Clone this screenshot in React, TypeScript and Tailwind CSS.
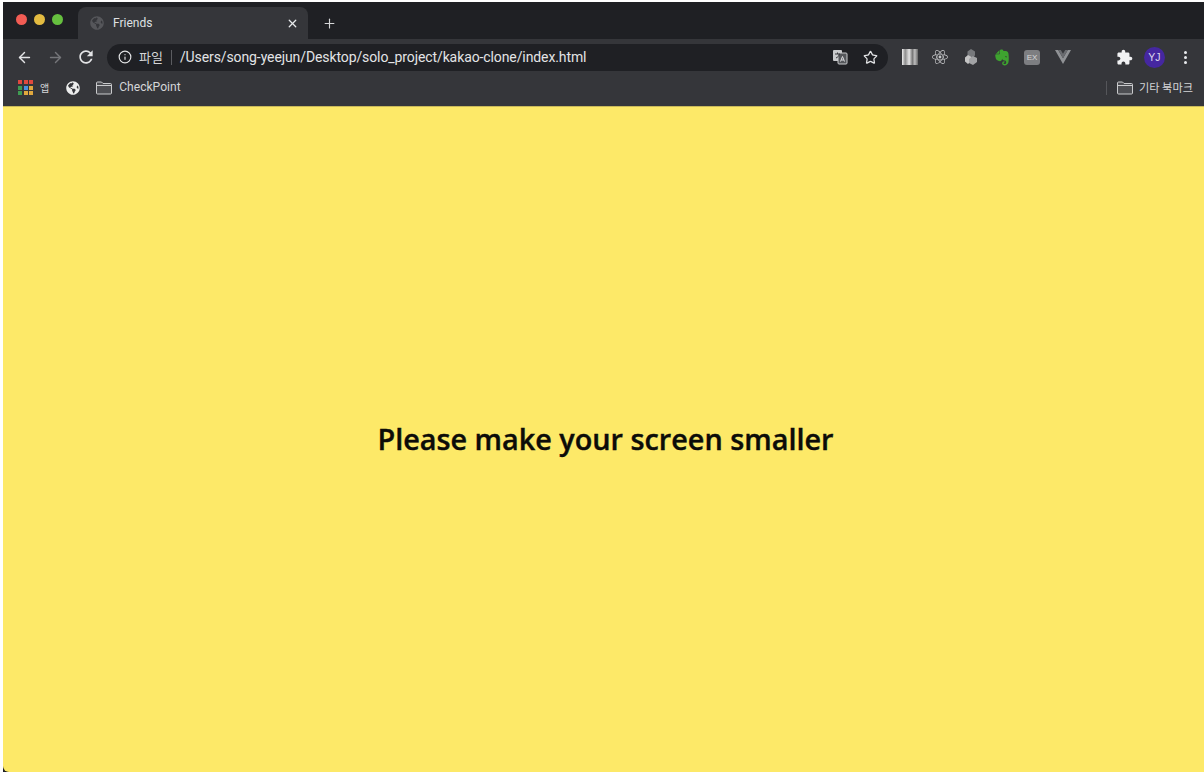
import React from 'react';
import { ArrowLeft, ArrowRight, Info, Star, Plus, X } from 'lucide-react';
import { FaGlobeAmericas, FaReact } from 'react-icons/fa';
import { SiEvernote } from 'react-icons/si';

const APP_COLORS = ['#e0483e', '#e0483e', '#e0483e', '#3f9c52', '#4a8fe0', '#e0a83e', '#3f9c52', '#e0a83e', '#e0a83e'];

function AppsGrid() {
  return (
    <div className="grid grid-cols-3 gap-[1.500px] w-[15px] h-[15px]">
      {APP_COLORS.map((color, i) => (
        <span key={i} className="w-[4px] h-[4px]" style={{ backgroundColor: color }} />
      ))}
    </div>
  );
}

function FolderIcon({ className }: { className: string }) {
  return (
    <svg className={className} width="16" height="14" viewBox="0 0 16 14">
      <path d="M0.500 2a1 1 0 0 1 1-1h4l1.500 1.500h7.500a1 1 0 0 1 1 1V12a1 1 0 0 1-1 1h-13a1 1 0 0 1-1-1z" fill="#4d4e52" stroke="#c9cacc" strokeWidth="1" />
      <path d="M1 4.500h14" stroke="#c9cacc" strokeWidth="1" />
    </svg>
  );
}

function ReloadIcon() {
  return (
    <svg width="20" height="20" viewBox="0 0 24 24" fill="#e3e4e6">
      <path d="M17.650 6.350C16.200 4.900 14.210 4 12 4c-4.420 0-7.990 3.580-7.990 8s3.570 8 7.990 8c3.730 0 6.840-2.550 7.730-6h-2.080c-.82 2.330-3.040 4-5.650 4-3.310 0-6-2.690-6-6s2.690-6 6-6c1.660 0 3.140.69 4.220 1.780L13 11h7V4l-2.350 2.350z" />
    </svg>
  );
}

function ExtensionIcon() {
  return (
    <svg width="17" height="17" viewBox="0 0 24 24" fill="#f1f2f3">
      <path d="M20.500 11H19V7c0-1.100-.9-2-2-2h-4V3.500C13 2.120 11.880 1 10.500 1S8 2.120 8 3.500V5H4c-1.100 0-1.990.9-1.990 2v3.800H3.500c1.490 0 2.700 1.210 2.700 2.700s-1.210 2.700-2.700 2.700H2V20c0 1.100.9 2 2 2h3.800v-1.500c0-1.490 1.210-2.700 2.700-2.700 1.490 0 2.700 1.210 2.700 2.700V22H17c1.100 0 2-.9 2-2v-4h1.500c1.380 0 2.500-1.120 2.500-2.500S21.880 11 20.500 11z" />
    </svg>
  );
}

function TranslateIcon() {
  return (
    <svg width="16" height="16" viewBox="0 0 16 16">
      <rect x="1" y="1" width="9" height="11" rx="1" fill="#c9cacc" />
      <rect x="6" y="4" width="9" height="11" rx="1" fill="#55575b" stroke="#c9cacc" strokeWidth="1" />
      <path d="M3 5h5M5.500 3.500v1.500M4 9c2-1 3-2 3.500-4" stroke="#3a3b3f" strokeWidth="1" fill="none" />
      <path d="M8.500 12.500l2-5 2 5M9.300 11h2.400" stroke="#dcdde0" strokeWidth="1" fill="none" />
    </svg>
  );
}

function BarsIcon() {
  return (
    <svg width="16" height="16" viewBox="0 0 16 16">
      <defs>
        <linearGradient id="bars">
          <stop offset="0" stopColor="#f0f0f0" />
          <stop offset="0.2" stopColor="#8d8d8d" />
          <stop offset="0.45" stopColor="#e4e4e4" />
          <stop offset="0.65" stopColor="#777" />
          <stop offset="0.8" stopColor="#bdbdbd" />
          <stop offset="1" stopColor="#666" />
        </linearGradient>
      </defs>
      <rect width="16" height="16" fill="url(#bars)" />
    </svg>
  );
}

function CubesIcon() {
  return (
    <svg width="12" height="16" viewBox="0 0 12 16">
      <path d="M6 0l4 2.500v4L6 9 2.500 6.500v-4z" fill="#77797c" />
      <path d="M3 6l3.500 2v4L3 15 0 12.500v-4z" fill="#c4c4c4" />
      <path d="M8 7l4 2v4l-4 3-4-2v-4z" fill="#a2a3a5" />
    </svg>
  );
}

function VueIcon() {
  return (
    <svg width="16" height="14" viewBox="0 0 16 14">
      <polygon points="0,0 3.200,0 8,8.300 12.800,0 16,0 8,14" fill="#909295" />
      <polygon points="3.200,0 5.800,0 8,3.800 10.200,0 12.800,0 8,8.300" fill="#6a6c70" />
    </svg>
  );
}

export default function App() {
  return (
    <div className="w-[1204px] h-[772px] overflow-hidden bg-white pt-[2px] pl-[3px] flex flex-col font-['Liberation_Sans',sans-serif]">
      <div className="flex-1 flex flex-col bg-[#1f2024] overflow-hidden">
        {/* tab strip */}
        <div className="h-[37px] flex items-end bg-[#1f2024] shrink-0">
          <div className="flex items-center gap-[7px] ml-[13px] h-[37px] pb-[2px]">
            <span className="w-[11px] h-[11px] rounded-full bg-[#f25c54]" />
            <span className="w-[11px] h-[11px] rounded-full bg-[#e3bb41]" />
            <span className="w-[11px] h-[11px] rounded-full bg-[#66c03f]" />
          </div>
          <div className="ml-[15px] w-[230px] h-[32px] rounded-t-[8px] bg-[#35363a] flex items-center pl-[12px] pr-[9px]">
            <FaGlobeAmericas className="w-[14px] h-[14px] text-[#55565a]" />
            <span className="ml-[9px] text-[12px] text-[#dfe0e2] font-['Roboto',sans-serif]">Friends</span>
            <X className="ml-auto w-[13px] h-[13px] text-[#e8eaed]" strokeWidth={2.4} />
          </div>
          <Plus className="ml-[14px] mb-[8px] w-[15px] h-[15px] text-[#d5d6d8]" strokeWidth={1.8} />
        </div>

        {/* address bar */}
        <div className="h-[32px] pt-[4px] flex items-center bg-[#35363a] shrink-0">
          <ArrowLeft className="ml-[13px] w-[17px] h-[17px] text-[#e3e4e6]" strokeWidth={2} />
          <ArrowRight className="ml-[14px] w-[17px] h-[17px] text-[#75767a]" strokeWidth={2} />
          <span className="ml-[12px] flex"><ReloadIcon /></span>
          <div className="ml-[11px] w-[781px] h-[27px] rounded-full bg-[#1f2024] flex items-center pl-[11px] pr-[10px]">
            <Info className="w-[14px] h-[14px] text-[#e3e4e6]" strokeWidth={2} />
            <span className="ml-[7px] text-[13px] text-[#d4d5d7] font-['Noto_Sans_CJK_KR',sans-serif]">파일</span>
            <span className="ml-[8px] w-[1px] h-[15px] bg-[#5b5c60]" />
            <span className="ml-[8px] text-[14px] tracking-[-0.1px] text-[#e3e4e6] font-['Roboto',sans-serif]">/Users/song-yeejun/Desktop/solo_project/kakao-clone/index.html</span>
            <span className="ml-auto flex items-center gap-[15px]">
              <TranslateIcon />
              <Star className="w-[15px] h-[15px] text-[#e3e4e6]" strokeWidth={2} />
            </span>
          </div>
          <div className="ml-[14px] flex items-center">
            <BarsIcon />
            <FaReact className="ml-[14px] w-[16px] h-[16px] text-[#c4c5c7]" />
            <span className="ml-[17px] flex"><CubesIcon /></span>
            <SiEvernote className="ml-[17px] w-[16px] h-[17px] text-[#3ea32f]" />
            <span className="ml-[14px] w-[16px] h-[15px] rounded-[3px] bg-[#7d7e81] text-[#d8d8d8] text-[8px] leading-[15px] text-center">EX</span>
            <span className="ml-[15px] flex"><VueIcon /></span>
            <span className="ml-[45px] flex"><ExtensionIcon /></span>
            <span className="ml-[11px] w-[21px] h-[21px] rounded-full bg-[#4527a0] text-[#dcd8ee] text-[10.5px] leading-[21px] text-center">YJ</span>
            <span className="ml-[19px] flex flex-col gap-[2px]">
              <span className="w-[3px] h-[3px] rounded-full bg-[#e8eaed]" />
              <span className="w-[3px] h-[3px] rounded-full bg-[#e8eaed]" />
              <span className="w-[3px] h-[3px] rounded-full bg-[#e8eaed]" />
            </span>
          </div>
        </div>

        {/* bookmarks */}
        <div className="h-[35px] flex items-center bg-[#35363a] shrink-0 pb-[2px]">
          <span className="ml-[15px]"><AppsGrid /></span>
          <span className="ml-[7px] text-[10px] text-[#d4d5d7] font-['Noto_Sans_CJK_KR',sans-serif]">앱</span>
          <FaGlobeAmericas className="ml-[17px] w-[14px] h-[14px] text-[#eceded]" />
          <FolderIcon className="ml-[16px]" />
          <span className="ml-[7px] text-[12.100px] text-[#d4d5d7] font-['Roboto',sans-serif]">CheckPoint</span>
          <span className="ml-auto w-[1px] h-[14px] bg-[#55565a]" />
          <FolderIcon className="ml-[10px]" />
          <span className="ml-[6px] mr-[11px] text-[11.200px] text-[#d4d5d7] font-['Noto_Sans_CJK_KR',sans-serif]">기타 북마크</span>
        </div>

        {/* page */}
        <main className="flex-1 bg-[#fde968] border-t border-[#c9b95a] rounded-bl-[6px] flex items-center justify-center pl-[4px]">
          <h1 className="text-[28.800px] font-semibold [-webkit-text-stroke:0.4px_#0c0c08] text-[#0c0c08] font-['Open_Sans',sans-serif] pb-[1px]">Please make your screen smaller</h1>
        </main>
      </div>
    </div>
  );
}
